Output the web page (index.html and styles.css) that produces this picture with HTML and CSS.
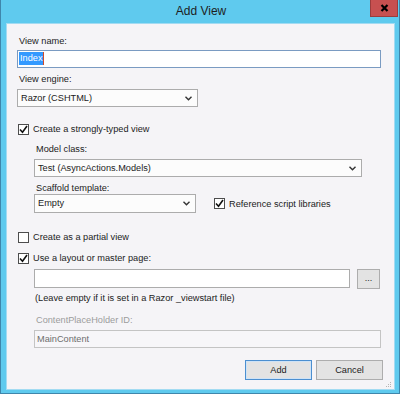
FILE: index.html
```html
<!DOCTYPE html>
<html lang="en">
<head>
    <meta charset="UTF-8">
    <meta name="viewport" content="width=device-width, initial-scale=1.0">
    <title>Add View</title>
    <link rel="stylesheet" href="styles.css">
</head>
<body>
    <div class="window">
        <div class="titlebar">
            <span class="title">Add View</span>
            <div class="close">
                <svg width="9" height="8" viewBox="0 0 9 8"><path d="M1.5 1 L7.5 7 M7.5 1 L1.5 7" stroke="#000" stroke-width="2.2"/></svg>
            </div>
        </div>

        <div class="client">
            <div class="label">View name:</div>
            <div class="textbox name-box"><span class="selected">Index</span><span class="caret"></span></div>

            <div class="label engine-label">View engine:</div>
            <div class="combo engine-combo">
                <span>Razor (CSHTML)</span>
                <svg class="chevron" width="7" height="5" viewBox="0 0 7 5"><path d="M0.5 0.8 L3.5 3.8 L6.5 0.8" fill="none" stroke="#333" stroke-width="1.4"/></svg>
            </div>

            <label class="check typed-check">
                <span class="box checked">
                    <svg width="9" height="9" viewBox="0 0 9 9"><path d="M1 4.5 L3.5 7.2 L8 1" fill="none" stroke="#111" stroke-width="1.6"/></svg>
                </span>
                Create a strongly-typed view
            </label>

            <div class="label sub model-label">Model class:</div>
            <div class="combo sub-ctl model-combo">
                <span>Test (AsyncActions.Models)</span>
                <svg class="chevron" width="7" height="5" viewBox="0 0 7 5"><path d="M0.5 0.8 L3.5 3.8 L6.5 0.8" fill="none" stroke="#333" stroke-width="1.4"/></svg>
            </div>

            <div class="label sub scaffold-label">Scaffold template:</div>
            <div class="scaffold-row">
                <div class="combo sub-ctl scaffold-combo">
                    <span>Empty</span>
                    <svg class="chevron" width="7" height="5" viewBox="0 0 7 5"><path d="M0.5 0.8 L3.5 3.8 L6.5 0.8" fill="none" stroke="#333" stroke-width="1.4"/></svg>
                </div>
                <label class="check ref-check">
                    <span class="box checked">
                        <svg width="9" height="9" viewBox="0 0 9 9"><path d="M1 4.5 L3.5 7.2 L8 1" fill="none" stroke="#111" stroke-width="1.6"/></svg>
                    </span>
                    Reference script libraries
                </label>
            </div>

            <label class="check partial-check">
                <span class="box"></span>
                Create as a partial view
            </label>

            <label class="check layout-check">
                <span class="box checked">
                    <svg width="9" height="9" viewBox="0 0 9 9"><path d="M1 4.5 L3.5 7.2 L8 1" fill="none" stroke="#111" stroke-width="1.6"/></svg>
                </span>
                Use a layout or master page:
            </label>

            <div class="layout-row">
                <div class="textbox layout-box"></div>
                <div class="btn browse">...</div>
            </div>
            <div class="hint">(Leave empty if it is set in a Razor _viewstart file)</div>

            <div class="label sub disabled placeholder-label">ContentPlaceHolder ID:</div>
            <div class="textbox sub-ctl disabled-box">MainContent</div>

            <div class="buttons">
                <div class="btn default">Add</div>
                <div class="btn">Cancel</div>
            </div>

            <svg class="grip" width="6" height="6" viewBox="0 0 6 6">
                <rect x="4" y="0" width="1" height="1" fill="#b5b5b5"/>
                <rect x="2" y="2" width="1" height="1" fill="#b5b5b5"/>
                <rect x="4" y="2" width="1" height="1" fill="#b5b5b5"/>
                <rect x="0" y="4" width="1" height="1" fill="#b5b5b5"/>
                <rect x="2" y="4" width="1" height="1" fill="#b5b5b5"/>
                <rect x="4" y="4" width="1" height="1" fill="#b5b5b5"/>
            </svg>
        </div>
    </div>
</body>
</html>
```

FILE: styles.css
```css
* {
    margin: 0;
    padding: 0;
    box-sizing: border-box;
}

body {
    font-family: 'Liberation Sans', Arial, sans-serif;
    font-size: 9.2px;
    color: #1b1b1b;
    background: #5fcaee;
    width: 400px;
    height: 394px;
    overflow: hidden;
}

.window {
    width: 400px;
    height: 394px;
    background: #5fcaee;
    border: 1px solid #3f86ab;
    border-top: none;
}

.titlebar {
    position: relative;
    height: 23px;
    text-align: center;
}

.title {
    font-size: 12px;
    line-height: 23px;
    color: #1e1e1e;
    padding-left: 2px;
}

.close {
    position: absolute;
    top: 0;
    right: 1px;
    width: 28px;
    height: 17px;
    background: #c75050;
    border: 1px solid #9b3c3c;
    border-top: none;
    display: flex;
    align-items: center;
    justify-content: center;
}

.client {
    position: relative;
    height: 367px;
    margin: 0 4px 0 5px;
    background: #f5f4f7;
    border: 1px solid #a3dbf2;
    padding: 11px 13px 0 10px;
}

.label {
    line-height: 12px;
    height: 12px;
    padding-left: 2px;
}

.label.sub {
    padding-left: 19px;
}

.label.disabled {
    color: #9c9c9c;
}

.textbox {
    height: 18px;
    background: #fff;
    border: 1px solid #acacac;
    line-height: 16px;
    padding-left: 2px;
}

.name-box {
    margin-top: 3px;
    width: 364px;
    border-color: #7a9bc2;
    display: flex;
    align-items: flex-start;
    padding-left: 1px;
}

.selected {
    background: #3399ff;
    color: #fff;
    height: 13px;
    line-height: 13px;
    margin-top: 1px;
    padding: 0 1px;
}

.caret {
    width: 1px;
    height: 13px;
    margin-top: 1px;
    background: #d04a2a;
}

.combo {
    position: relative;
    height: 18px;
    background: #fcfcfc;
    border: 1px solid #acacac;
    line-height: 16px;
    padding-left: 3px;
}

.chevron {
    position: absolute;
    right: 5px;
    top: 6px;
}

.sub-ctl {
    margin-left: 17px;
}

.engine-label {
    margin-top: 5px;
}

.engine-combo {
    margin-top: 4px;
    width: 181px;
}

.check {
    display: flex;
    align-items: center;
    gap: 4px;
    height: 14px;
    line-height: 14px;
    padding-left: 1px;
}

.box {
    width: 11px;
    height: 11px;
    background: #fff;
    border: 1px solid #4d4d4d;
    display: flex;
    align-items: center;
    justify-content: center;
}

.typed-check {
    margin-top: 15px;
}

.model-label {
    margin-top: 7px;
}

.model-combo {
    margin-top: 4px;
    width: 328px;
}

.scaffold-label {
    margin-top: 5px;
}

.scaffold-row {
    display: flex;
    align-items: center;
    height: 19px;
}

.scaffold-combo {
    width: 162px;
    height: 19px;
}

.ref-check {
    margin-left: 18px;
    padding-left: 0;
}

.partial-check {
    margin-top: 17px;
}

.layout-check {
    margin-top: 7px;
}

.layout-row {
    display: flex;
    margin-top: 4px;
    margin-left: 17px;
    gap: 7px;
    align-items: flex-start;
}

.layout-box {
    width: 316px;
    height: 19px;
}

.btn {
    background: #e3e3e3;
    border: 1px solid #adadad;
    text-align: center;
}

.browse {
    width: 23px;
    height: 20px;
    line-height: 16px;
    font-size: 9px;
}

.hint {
    margin-top: 3px;
    padding-left: 18px;
    line-height: 12px;
}

.placeholder-label {
    margin-top: 10px;
}

.disabled-box {
    margin-top: 4px;
    width: 347px;
    background: #f7f6f9;
    border-color: #c4c4c4;
    color: #6d6d6d;
    padding-left: 2px;
}

.buttons {
    display: flex;
    justify-content: flex-end;
    gap: 4px;
    margin-top: 12px;
    margin-right: -2px;
}

.buttons .btn {
    width: 67px;
    height: 20px;
    line-height: 18px;
}

.btn.default {
    border-color: #4c8fd0;
    box-shadow: inset 0 0 0 1px #cfe3f6;
}

.grip {
    position: absolute;
    right: 2px;
    bottom: 1px;
}
```
